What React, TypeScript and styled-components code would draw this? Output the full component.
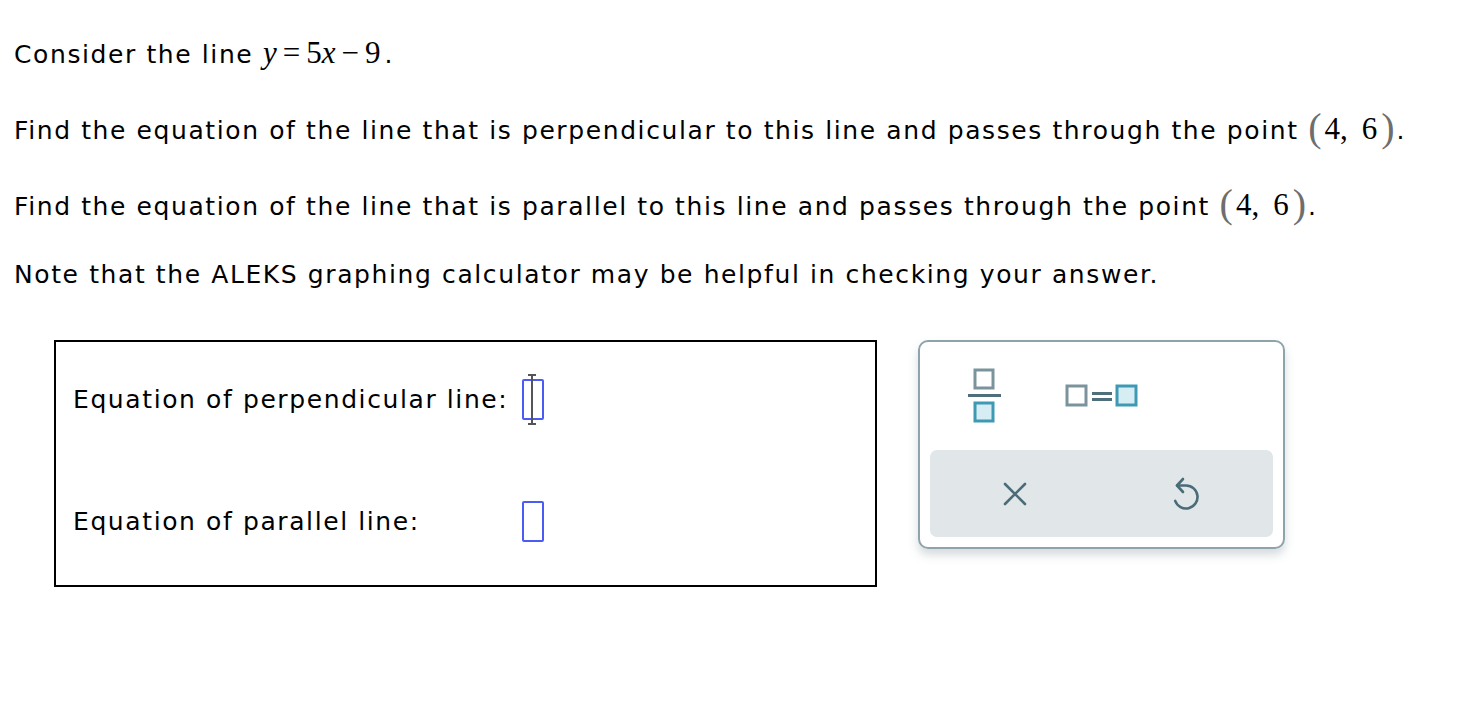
import React from 'react'
import styled, { createGlobalStyle } from 'styled-components'

const GlobalStyle = createGlobalStyle`
  * {
    box-sizing: border-box;
  }
  body {
    margin: 0;
    background: #fff;
  }
`

const Page = styled.div`
  font-family: 'DejaVu Sans', Verdana, sans-serif;
  font-size: 25px;
  letter-spacing: 1.6px;
  color: #000;
  padding: 31px 0 0 14px;
`

const Para = styled.p<{ gap: number }>`
  margin: 0 0 ${({ gap }) => gap}px 0;
  line-height: 48px;
  height: 48px;
  white-space: nowrap;
`

const Math = styled.span`
  font-family: 'Liberation Serif', 'Times New Roman', serif;
  font-size: 31px;
  line-height: 0;
  letter-spacing: 0;
  margin-right: 4px;
`

const Var = styled.i`
  font-style: italic;
`

const Op = styled.span`
  margin: 0 6px;
`

const Paren = styled.span<{ side: 'l' | 'r' }>`
  font-family: 'Liberation Serif', serif;
  font-size: 40px;
  line-height: 0;
  letter-spacing: 0;
  color: #6e6e6e;
  vertical-align: -2px;
  margin: ${({ side }) => (side === 'l' ? '0 3px 0 0' : '0 2px 0 0')};
`

const Sep = styled.span`
  margin-right: 14px;
`

const Work = styled.div`
  display: flex;
  align-items: flex-start;
  gap: 41px;
  margin-top: 41px;
  margin-left: 40px;
`

const AnswerBox = styled.div`
  width: 823px;
  height: 247px;
  border: 2px solid #000;
  padding: 31px 0 0 17px;
`

const Row = styled.div<{ top: number }>`
  display: grid;
  grid-template-columns: 449px auto;
  align-items: center;
  height: 52px;
  margin-top: ${({ top }) => top}px;
`

const Slot = styled.span`
  position: relative;
  display: inline-block;
  width: 22px;
  height: 41px;
  border: 2.5px solid #4b5cf5;
  border-radius: 2px;
`

const Cursor = styled.span`
  position: absolute;
  left: 7px;
  top: -7px;
  width: 4px;
  height: 51px;
  border-left: 2px solid #555;
  &::before,
  &::after {
    content: '';
    position: absolute;
    left: -5px;
    width: 8px;
    height: 2px;
    background: #555;
  }
  &::before {
    top: 0;
  }
  &::after {
    bottom: 0;
  }
`

const Palette = styled.div`
  width: 367px;
  height: 209px;
  border: 2px solid #8fa3ad;
  border-radius: 10px;
  box-shadow: 0 6px 10px rgba(90, 110, 120, 0.25);
  padding: 0 10px 10px 10px;
  display: flex;
  flex-direction: column;
`

const Keys = styled.div`
  height: 108px;
  display: flex;
  align-items: center;
  padding-left: 37px;
  gap: 62px;
`

const Actions = styled.div`
  flex: 1;
  background: #e1e6e9;
  border-radius: 7px;
  display: flex;
  align-items: center;
  justify-content: space-around;
`

const Key = styled.button`
  border: 0;
  background: transparent;
  padding: 0;
  display: flex;
  align-items: center;
  justify-content: center;
`

const FractionIcon = () => (
  <svg width="36" height="56" viewBox="0 0 36 56">
    <rect x="8" y="2" width="18" height="18" fill="#fff" stroke="#7b939c" strokeWidth="3" />
    <rect x="1" y="26" width="33" height="3" fill="#4f6f7c" />
    <rect x="8" y="35" width="18" height="18" fill="#d5edf3" stroke="#3e9ab4" strokeWidth="3" />
  </svg>
)

const EqualsIcon = () => (
  <svg width="76" height="24" viewBox="0 0 76 24">
    <rect x="2" y="2" width="19" height="19" fill="#fff" stroke="#7b939c" strokeWidth="3" />
    <rect x="27" y="8" width="20" height="3" fill="#4f6f7c" />
    <rect x="27" y="14" width="20" height="3" fill="#4f6f7c" />
    <rect x="52" y="2" width="19" height="19" fill="#d5edf3" stroke="#3e9ab4" strokeWidth="3" />
  </svg>
)

const ClearIcon = () => (
  <svg width="26" height="26" viewBox="0 0 26 26">
    <path d="M3 3 L23 23 M23 3 L3 23" stroke="#4a6b78" strokeWidth="2.6" strokeLinecap="round" />
  </svg>
)

const UndoIcon = () => (
  <svg width="30" height="34" viewBox="0 0 30 34">
    <path
      d="M6 8.5 L15 8.5 A11.5 11.5 0 1 1 4.2 23.9"
      fill="none"
      stroke="#4a6b78"
      strokeWidth="2.6"
      strokeLinecap="round"
    />
    <path
      d="M12 2 L6 8.5 L12 15"
      fill="none"
      stroke="#4a6b78"
      strokeWidth="2.6"
      strokeLinecap="round"
      strokeLinejoin="round"
    />
  </svg>
)

function Point() {
  return (
    <>
      <Paren side="l">(</Paren>
      <Math>
        4<Sep>,</Sep>6
      </Math>
      <Paren side="r">)</Paren>.
    </>
  )
}

export default function App(): JSX.Element {
  return (
    <Page>
      <GlobalStyle />
      <Para gap={28}>
        Consider the line{' '}
        <Math>
          <Var>y</Var>
          <Op>=</Op>5<Var>x</Var>
          <Op>−</Op>9
        </Math>
        .
      </Para>
      <Para gap={28}>
        Find the equation of the line that is perpendicular to this line and passes through the point <Point />
      </Para>
      <Para gap={20}>
        Find the equation of the line that is parallel to this line and passes through the point <Point />
      </Para>
      <Para gap={0}>Note that the ALEKS graphing calculator may be helpful in checking your answer.</Para>
      <Work>
        <AnswerBox>
          <Row top={0}>
            <span>Equation of perpendicular line:</span>
            <Slot>
              <Cursor />
            </Slot>
          </Row>
          <Row top={70}>
            <span>Equation of parallel line:</span>
            <Slot />
          </Row>
        </AnswerBox>
        <Palette>
          <Keys>
            <Key aria-label="fraction">
              <FractionIcon />
            </Key>
            <Key aria-label="equals">
              <EqualsIcon />
            </Key>
          </Keys>
          <Actions>
            <Key aria-label="clear">
              <ClearIcon />
            </Key>
            <Key aria-label="undo">
              <UndoIcon />
            </Key>
          </Actions>
        </Palette>
      </Work>
    </Page>
  )
}
